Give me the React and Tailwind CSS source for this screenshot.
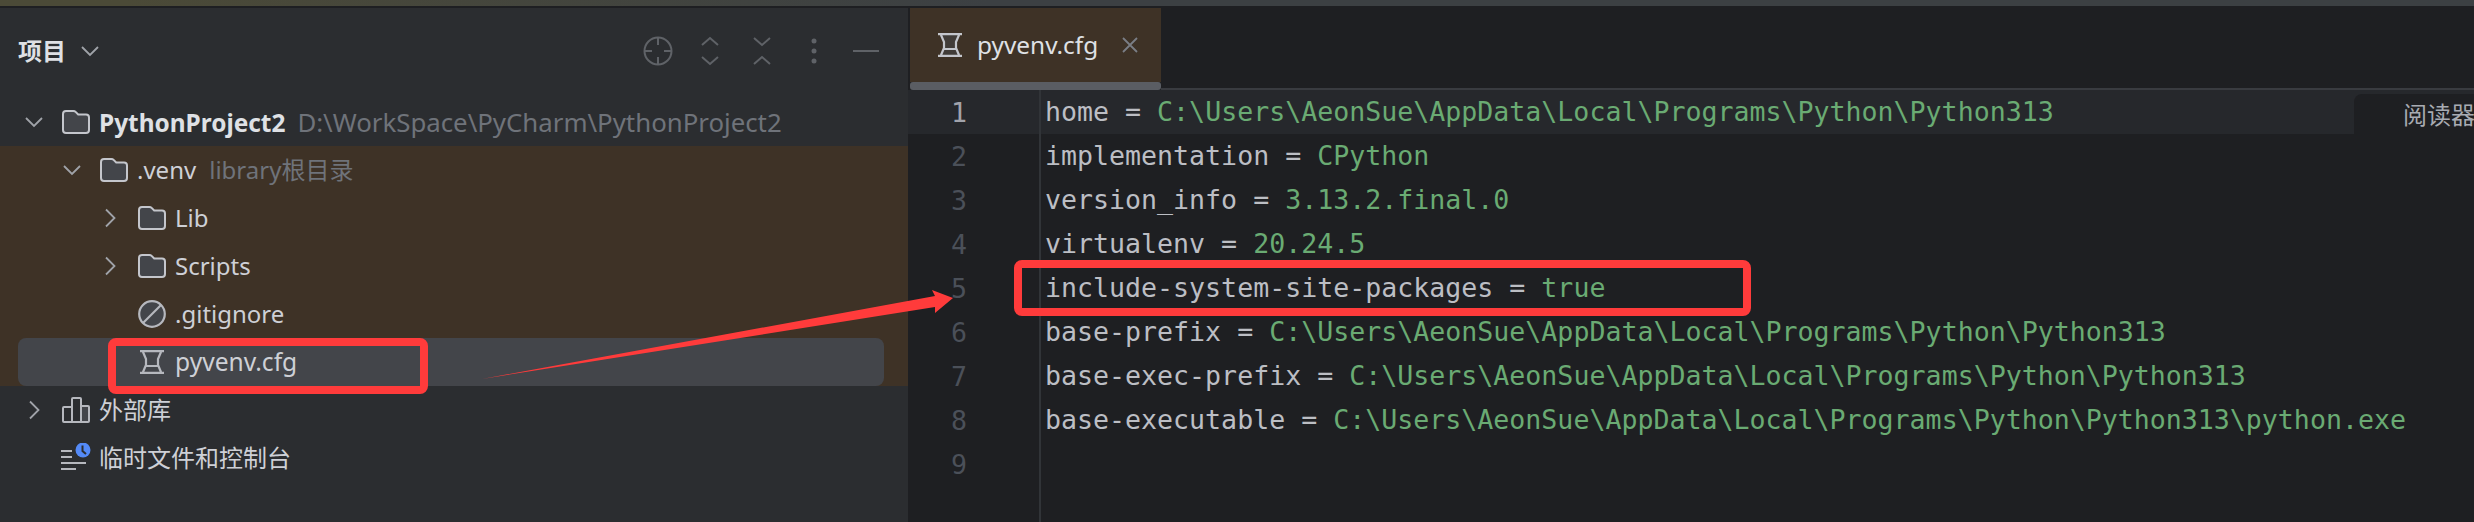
import React from 'react';

const UI_FONT = "font-['Noto_Sans','Noto_Sans_CJK_SC',sans-serif]";

function FolderIcon() {
  return (
    <svg width="28" height="24" viewBox="0 0 28 24" className="shrink-0">
      <path d="M1 4a3 3 0 0 1 3-3h7.5a3 3 0 0 1 2.1.9l2.6 2.6H24a3 3 0 0 1 3 3V20a3 3 0 0 1-3 3H4a3 3 0 0 1-3-3Z" fill="#43454a" stroke="#c4c6cc" strokeWidth="2" />
    </svg>
  );
}

function ChevronDown() {
  return (
    <svg width="24" height="24" viewBox="0 0 24 24" className="shrink-0">
      <path d="M4 8l8 8 8-8" fill="none" stroke="#a0a3a9" strokeWidth="1.8" />
    </svg>
  );
}

function ChevronRight() {
  return (
    <svg width="24" height="24" viewBox="0 0 24 24" className="shrink-0">
      <path d="M8 3.5l8.5 8.5-8.5 8.5" fill="none" stroke="#a0a3a9" strokeWidth="1.8" />
    </svg>
  );
}

function IgnoreIcon() {
  return (
    <svg width="28" height="28" viewBox="0 0 28 28" className="shrink-0">
      <circle cx="14" cy="14" r="12.8" fill="#43454a" stroke="#b6b8be" strokeWidth="2.2" />
      <path d="M23 5L5 23" stroke="#b6b8be" strokeWidth="2.2" />
    </svg>
  );
}

function CfgIcon({ color = '#b6b8be' }) {
  return (
    <svg width="24" height="24" viewBox="0 0 24 24" className="shrink-0">
      <path d="M3 2l3 7v6l-3 7h18l-3-7V9l3-7Z" fill="#43454a" fillOpacity="0.5" />
      <path d="M0 1.2h24M0 22.8h24M3 2l3 7v6l-3 7M21 2l-3 7v6l3 7M6 16h12" fill="none" stroke={color} strokeWidth="2.2" />
    </svg>
  );
}

function LibraryIcon() {
  return (
    <svg width="28" height="26" viewBox="0 0 28 26" className="shrink-0">
      <path d="M19 9h7a1 1 0 0 1 1 1v14a1 1 0 0 1-1 1h-7Z" fill="#43454a" />
      <path d="M2 10h8V2a1 1 0 0 1 1-1h7a1 1 0 0 1 1 1v7h7a1 1 0 0 1 1 1v14a1 1 0 0 1-1 1H2a1 1 0 0 1-1-1V11a1 1 0 0 1 1-1ZM10 10v15M19 9v16" fill="none" stroke="#b6b8be" strokeWidth="2" />
    </svg>
  );
}

function ScratchIcon() {
  return (
    <svg width="30" height="30" viewBox="0 0 30 30" className="shrink-0">
      <path d="M0 8h11M0 14h11M0 20h25M0 26h15" stroke="#b6b8be" strokeWidth="2" />
      <circle cx="22" cy="7" r="7.5" fill="#548af7" />
      <path d="M21.5 2.5V8l3.5 3" fill="none" stroke="#2b2d30" strokeWidth="2" />
    </svg>
  );
}

function ToolButton({ children }) {
  return <div className="flex w-[52px] justify-center">{children}</div>;
}

function PanelTools() {
  const c = '#5f6267';
  return (
    <div className="ml-auto flex items-center pr-[16px] pb-[4px]">
      <ToolButton>
        <svg width="30" height="30" viewBox="0 0 30 30">
          <circle cx="15" cy="15" r="13.5" fill="none" stroke={c} strokeWidth="2" />
          <path d="M15 1v8M15 21v8M1 15h8M21 15h8" stroke={c} strokeWidth="2" />
        </svg>
      </ToolButton>
      <ToolButton>
        <svg width="20" height="30" viewBox="0 0 20 30">
          <path d="M2 9l8-7 8 7M2 21l8 7 8-7" fill="none" stroke={c} strokeWidth="2" />
        </svg>
      </ToolButton>
      <ToolButton>
        <svg width="20" height="30" viewBox="0 0 20 30">
          <path d="M2 2l8 7 8-7M2 28l8-7 8 7" fill="none" stroke={c} strokeWidth="2" />
        </svg>
      </ToolButton>
      <ToolButton>
        <svg width="8" height="28" viewBox="0 0 8 28">
          <circle cx="4" cy="4" r="2.5" fill={c} />
          <circle cx="4" cy="14" r="2.5" fill={c} />
          <circle cx="4" cy="24" r="2.5" fill={c} />
        </svg>
      </ToolButton>
      <ToolButton>
        <svg width="26" height="4" viewBox="0 0 26 4">
          <path d="M0 2h26" stroke={c} strokeWidth="2" />
        </svg>
      </ToolButton>
    </div>
  );
}

function TreeRow({ pad, arrow, icon, children }) {
  return (
    <div className={`flex h-12 items-center ${pad}`}>
      <div className="flex w-6 justify-center">{arrow}</div>
      <div className="ml-4 flex w-7 justify-center">{icon}</div>
      <div className="ml-[9px] flex items-baseline whitespace-nowrap text-[#ced0d6]">{children}</div>
    </div>
  );
}

function ProjectPanel() {
  return (
    <aside className={`flex w-[908px] shrink-0 flex-col bg-[#2b2d30] text-[24px] ${UI_FONT}`}>
      <div className="flex h-[90px] items-center pl-[18px]">
        <span className="pb-[4px] text-[24px] font-bold text-[#dfe1e5]">项目</span>
        <svg width="18" height="12" viewBox="0 0 18 12" className="ml-[15px] mb-[4px]">
          <path d="M1 2l8 8 8-8" fill="none" stroke="#a0a3a9" strokeWidth="1.8" />
        </svg>
        <PanelTools />
      </div>

      <TreeRow pad="pl-[22px]" arrow={<ChevronDown />} icon={<FolderIcon />}>
        <span className="text-[24.4px] font-bold text-[#dfe1e5]">PythonProject2</span>
        <span className="ml-[12px] text-[25.8px] text-[#6f737a]">D:\WorkSpace\PyCharm\PythonProject2</span>
      </TreeRow>

      <div className="bg-[#3e3226]">
        <TreeRow pad="pl-[60px]" arrow={<ChevronDown />} icon={<FolderIcon />}>
          <span>.venv</span>
          <span className="ml-[13px] text-[#6f737a]">library根目录</span>
        </TreeRow>
        <TreeRow pad="pl-[98px]" arrow={<ChevronRight />} icon={<FolderIcon />}>
          Lib
        </TreeRow>
        <TreeRow pad="pl-[98px]" arrow={<ChevronRight />} icon={<FolderIcon />}>
          Scripts
        </TreeRow>
        <TreeRow pad="pl-[98px]" icon={<IgnoreIcon />}>
          .gitignore
        </TreeRow>
        <div className="ml-[18px] mr-[24px] rounded-lg bg-[#43454a]">
          <TreeRow pad="pl-[80px]" icon={<CfgIcon />}>
            <span className="text-[24.6px]">pyvenv.cfg</span>
          </TreeRow>
        </div>
      </div>

      <TreeRow pad="pl-[22px]" arrow={<ChevronRight />} icon={<LibraryIcon />}>
        外部库
      </TreeRow>
      <TreeRow pad="pl-[22px]" icon={<ScratchIcon />}>
        临时文件和控制台
      </TreeRow>
    </aside>
  );
}

const PATH = 'C:\\Users\\AeonSue\\AppData\\Local\\Programs\\Python\\Python313';

const LINES = [
  ['home', PATH],
  ['implementation', 'CPython'],
  ['version_info', '3.13.2.final.0'],
  ['virtualenv', '20.24.5'],
  ['include-system-site-packages', 'true'],
  ['base-prefix', PATH],
  ['base-exec-prefix', PATH],
  ['base-executable', PATH + '\\python.exe'],
];

function CodeRow({ num, name, value, current, children }) {
  return (
    <div className={`relative flex h-11 items-center ${current ? 'bg-[#26282c]' : ''}`}>
      <div className={`h-full w-[131px] shrink-0 pl-[43px] leading-[46px] ${current ? 'text-[#a1a3ab]' : 'text-[#4b5059]'}`}>{num}</div>
      <div className="h-full w-[2px] shrink-0 bg-[#313438]" />
      <div className="whitespace-pre pl-[4px] leading-[46px] text-[#bcbec4]">
        {name}
        {name && ' = '}
        <span className="text-[#6aab73]">{value}</span>
      </div>
      {children}
    </div>
  );
}

function Editor() {
  return (
    <main className="flex min-w-0 flex-1 flex-col bg-[#1e1f22]">
      <div className="flex h-[74px] pl-[2px]">
        <div className={`flex w-[251px] items-center bg-[#3e3226] pl-[28px] ${UI_FONT}`}>
          <CfgIcon color="#c4c6cc" />
          <span className="ml-[15px] text-[24.4px] text-[#dfe1e5]">pyvenv.cfg</span>
          <svg width="16" height="16" viewBox="0 0 16 16" className="ml-[24px]">
            <path d="M1 1l14 14M15 1L1 15" stroke="#7a7e85" strokeWidth="1.8" />
          </svg>
        </div>
      </div>
      <div className="flex h-[8px] items-end pl-[2px]">
        <div className="h-[8px] w-[251px] shrink-0 rounded-[3px] bg-[#5a5d63]" />
        <div className="h-[2px] flex-1 bg-[#393b40]" />
      </div>

      <div className="flex flex-1 flex-col font-['DejaVu_Sans_Mono',monospace] text-[26.6px]">
        {LINES.map(([name, value], i) => (
          <CodeRow key={name} num={i + 1} name={name} value={value} current={i === 0}>
            {i === 0 && (
              <div className={`absolute right-0 bottom-0 h-10 w-[120px] rounded-tl-lg bg-[#1e1f22] pl-[49px] text-[24px] leading-[42px] whitespace-nowrap text-[#a8abb2] ${UI_FONT}`}>
                阅读器
              </div>
            )}
          </CodeRow>
        ))}
        <CodeRow num={9} />
        <div className="flex flex-1">
          <div className="w-[131px]" />
          <div className="w-[2px] bg-[#313438]" />
        </div>
      </div>
    </main>
  );
}

export default function App() {
  return (
    <div className="relative flex h-[522px] w-[2474px] flex-col overflow-hidden bg-[#1e1f22]">
      <div className="h-[6px] shrink-0 bg-linear-to-r from-[#4b4a37] from-5% to-[#3c4043] to-40%" />
      <div className="flex min-h-0 flex-1 pt-[2px]">
        <ProjectPanel />
        <Editor />
      </div>

      {/* annotations drawn on top of the screenshot */}
      <div className="absolute top-[338px] left-[108px] h-[56px] w-[320px] rounded-lg border-8 border-[#ff3b3b]" />
      <div className="absolute top-[260px] left-[1014px] h-[56px] w-[737px] rounded-lg border-8 border-[#ff3b3b]" />
      <svg width="2474" height="522" viewBox="0 0 2474 522" className="absolute top-0 left-0">
        <polygon points="482,379 935,296 932,290 953,298 935,313 935,307" fill="#ff3b3b" />
      </svg>
    </div>
  );
}
